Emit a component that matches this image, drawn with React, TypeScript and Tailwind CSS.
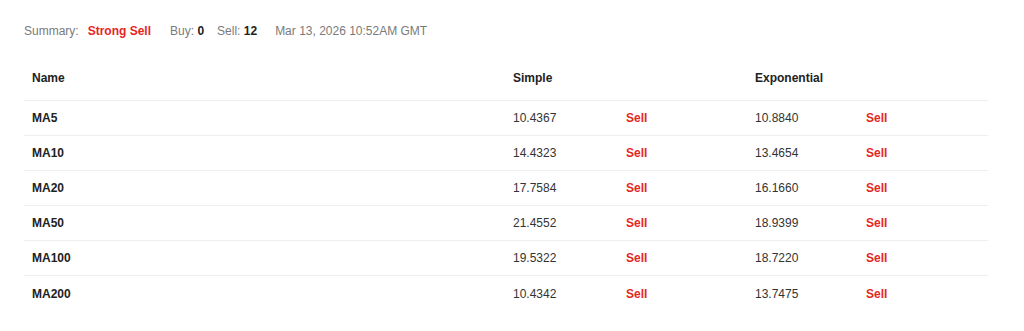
import React from "react"

const rows = [
    { name: "MA5", simple: "10.4367", exp: "10.8840" },
    { name: "MA10", simple: "14.4323", exp: "13.4654" },
    { name: "MA20", simple: "17.7584", exp: "16.1660" },
    { name: "MA50", simple: "21.4552", exp: "18.9399" },
    { name: "MA100", simple: "19.5322", exp: "18.7220" },
    { name: "MA200", simple: "10.4342", exp: "13.7475" },
]

const cols = "grid grid-cols-[481px_113px_128px_112px_130px]"

export default function App() {
    return (
        <div className="w-[1024px] h-[331px] bg-white px-6 pt-[23px] text-[12px] text-[#333]" style={{ fontFamily: "'Liberation Sans', Arial, sans-serif" }}>
            {/* Summary line */}
            <div className="flex items-center h-4 leading-4 text-[#7a7a7a]">
                <span>Summary:</span>
                <span className="ml-[9px] font-bold text-[#e5261f]">Strong Sell</span>
                <span className="ml-[19px]">Buy: <b className="font-bold text-[#222]">0</b></span>
                <span className="ml-[13px]">Sell: <b className="font-bold text-[#222]">12</b></span>
                <span className="ml-[18px]">Mar 13, 2026 10:52AM GMT</span>
            </div>

            {/* Table */}
            <div className="mt-[18px] w-[964px]">
                <div className={`${cols} h-[44px] items-start pt-[12px] font-bold text-[#222] border-b border-[#eeeeee]`}>
                    <div className="pl-2">Name</div>
                    <div className="pl-2 col-span-2">Simple</div>
                    <div className="pl-[9px] col-span-2">Exponential</div>
                </div>
                {rows.map((r, i) => (
                    <div
                        key={r.name}
                        className={`${cols} h-[35px] items-center ${i < rows.length - 1 ? "border-b border-[#eeeeee]" : ""}`}
                    >
                        <div className="pl-2 font-bold text-[#222]">{r.name}</div>
                        <div className="pl-2">{r.simple}</div>
                        <div className="pl-2 font-bold text-[#e5261f]">Sell</div>
                        <div className="pl-[9px]">{r.exp}</div>
                        <div className="pl-2 font-bold text-[#e5261f]">Sell</div>
                    </div>
                ))}
            </div>
        </div>
    )
}
